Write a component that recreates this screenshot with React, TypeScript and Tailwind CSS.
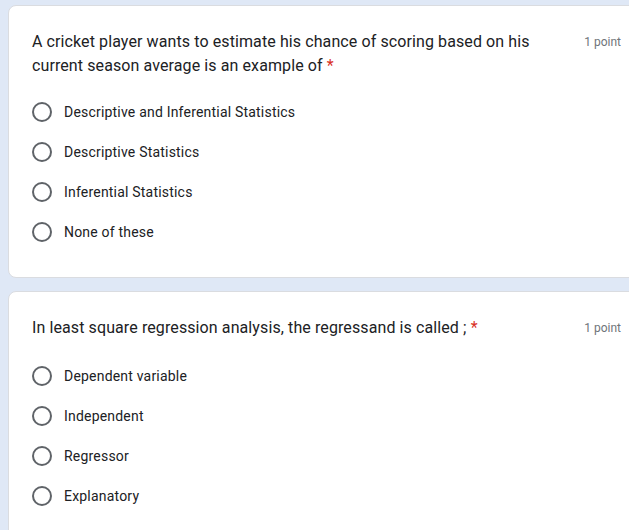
import React from 'react';

type Question = {
  title: string;
  options: string[];
  spaced?: boolean;
};

const questions: Question[] = [
  {
    title: 'A cricket player wants to estimate his chance of scoring based on his current season average is an example of',
    options: [
      'Descriptive and Inferential Statistics',
      'Descriptive Statistics',
      'Inferential Statistics',
      'None of these',
    ],
  },
  {
    title: 'In least square regression analysis, the regressand is called ;',
    options: ['Dependent variable', 'Independent', 'Regressor', 'Explanatory'],
    spaced: true,
  },
];

function Radio() {
  return <span className="block w-5 h-5 rounded-full border-2 border-[#5f6368] shrink-0" />;
}

function QuestionCard({ q }: { q: Question }) {
  return (
    <div className="w-[638px] ml-2 bg-white rounded-lg border border-[#dadce0] pl-[23px] pr-6 pt-6 pb-[25px]">
      <div className="flex items-start justify-between">
        <div className="w-[520px] text-[16px] leading-6 text-[#202124] font-['Roboto',sans-serif] tracking-[0.1px]">
          {q.title} <span className="text-[#d93025]">*</span>
        </div>
        <div className="text-[12px] leading-6 text-[#70757a] font-['Roboto',sans-serif]">1 point</div>
      </div>
      <div className={q.spaced ? 'mt-[16px] flex flex-col' : 'mt-[14px] flex flex-col'}>
        {q.options.map(o => (
          <label key={o} className="flex items-center h-10 gap-3">
            <Radio />
            <span className="text-[14px] text-[#202124] font-['Roboto',sans-serif] tracking-[0.2px]">{o}</span>
          </label>
        ))}
      </div>
    </div>
  );
}

export default function App() {
  return (
    <div className="w-[629px] h-[530px] overflow-hidden bg-[#dfe8f6] pt-[5px] flex flex-col gap-[13px]">
      {questions.map(q => <QuestionCard key={q.title} q={q} />)}
    </div>
  );
}
